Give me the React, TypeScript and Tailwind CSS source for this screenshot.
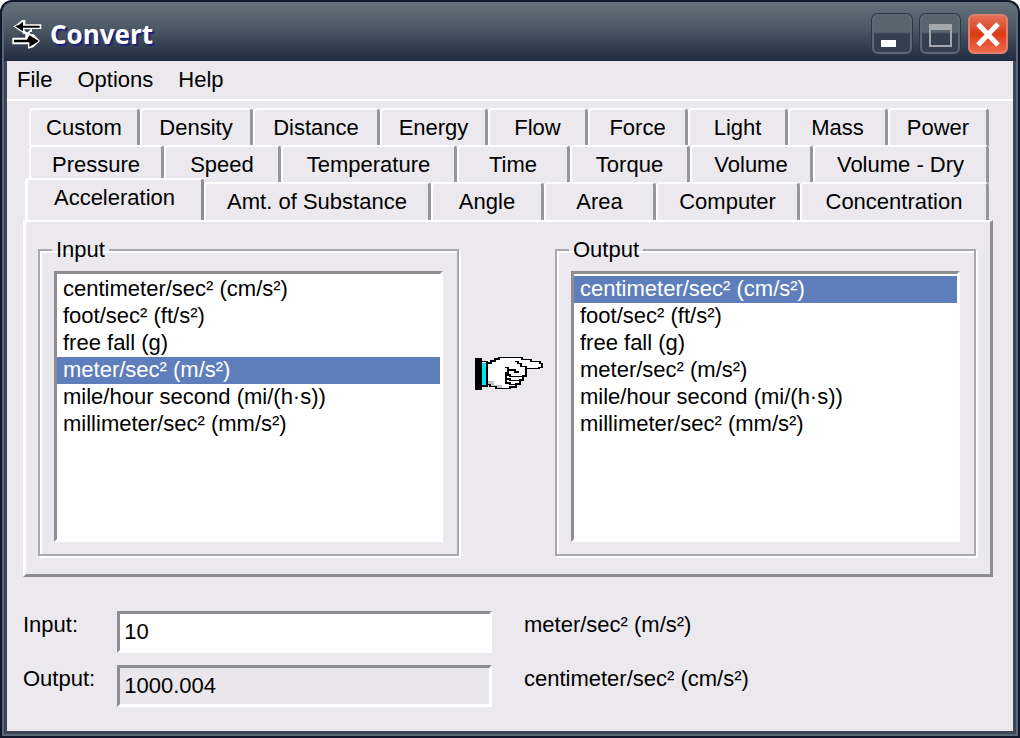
import { useState } from "react";

const UNITS = [
  "centimeter/sec² (cm/s²)",
  "foot/sec² (ft/s²)",
  "free fall (g)",
  "meter/sec² (m/s²)",
  "mile/hour second (mi/(h·s))",
  "millimeter/sec² (mm/s²)",
];

const ROW_ONE = ["Custom", "Density", "Distance", "Energy", "Flow", "Force", "Light", "Mass", "Power"];
const ROW_TWO = ["Pressure", "Speed", "Temperature", "Time", "Torque", "Volume", "Volume - Dry"];
const ROW_THREE = ["Acceleration", "Amt. of Substance", "Angle", "Area", "Computer", "Concentration"];

function Tab({ label, selected = false }: { label: string; selected?: boolean }) {
  return (
    <button
      type="button"
      role="tab"
      aria-selected={selected}
      className={
        selected
          ? "relative z-10 -mt-1 -ml-1 h-[42px] rounded-t-sm border-t-2 border-r-3 border-l-3 border-t-white border-r-[#8e8d91] border-l-white bg-[#ebe9ed] pb-1"
          : "h-[38px] rounded-t-sm border-t-2 border-r-3 border-l-2 border-t-white border-r-[#96959a] border-l-white bg-[#ebe9ed]"
      }
    >
      {label}
    </button>
  );
}

function UnitList({ title, value, onChange }: { title: string; value: string; onChange: (v: string) => void }) {
  return (
    <fieldset className="min-w-0 flex-1 border-2 border-[#a9a8ac] px-[14px] pt-[9px] pb-3 shadow-[2px_2px_0_#fff,inset_2px_2px_0_#fff]">
      <legend className="-ml-0.5 px-1 leading-6">{title}</legend>
      <select
        size={6}
        aria-label={title}
        value={value}
        onChange={(e) => onChange(e.target.value)}
        className="block h-[271px] w-full appearance-none overflow-hidden border-3 border-t-[#8e8d91] border-r-white border-b-white border-l-[#8e8d91] bg-white px-0 py-0.5 outline-none"
      >
        {UNITS.map((unit) => (
          <option
            key={unit}
            value={unit}
            className="h-[27px] px-1.5 py-0 leading-[27px] text-black checked:bg-[#5f7fbc]! checked:text-white!"
          >
            {unit}
          </option>
        ))}
      </select>
    </fieldset>
  );
}

function ArrowsIcon() {
  return (
    <svg width="30" height="30" viewBox="36 49 90 90" aria-hidden="true">
      <path
        d="M40 71L52 64L66 52H76V65H124V79H96V88H90V94H100L120 115L100 134L84 138V125H37V105H76V94H70L66 88L52 80Z"
        fill="#fff"
      />
      <path d="M45 71L57 66L69 57V69H119V75H69V86L57 78ZM42 111H81L88 98L102 106L116 115L102 125L88 132V119H42Z" fill="#000" />
      <path d="M72 80H92L84 88H78ZM56 95H74V102H56Z" fill="#3a4553" />
    </svg>
  );
}

function HandIcon() {
  return (
    <svg width="70" height="38" viewBox="42 57 210 114" shapeRendering="crispEdges" aria-hidden="true">
      <path d="M66 78H84L105 75L117 66H186V75H216V81H240L246 87V96L240 99H198V123L186 132L177 144L165 153L150 162H108L84 153L66 156Z" fill="#fff" />
      <path d="M84 138H102V150H126V159H108V153H84Z" fill="#c4c4c8" />
      <path d="M45 69H66V165H45Z" fill="#000" />
      <path d="M66 84H78V153H66Z" fill="#00e8ee" />
      <g fill="none" stroke="#000" strokeWidth="5">
        <path d="M66 79H81V153H66M81 84H93V78H105V72H117V67H186V73H213V79H240V85H246V97H237V100H198" />
        <path d="M165 79H174V85H183V94H198V123H189V135H180V147H168V156H150V160H108V154H90V148H81" />
        <path d="M135 97H144V105H165V111H177" />
        <path d="M144 108V114H138V120H150V124H189" />
        <path d="M138 120V132H150V136H183" />
        <path d="M138 132V144H150V148H174" />
      </g>
    </svg>
  );
}

const captionButton =
  "grid size-10 place-items-center rounded-md border-2 border-[#5d6876] bg-linear-to-b from-[#59646e] from-45% to-[#344050] to-50% shadow-[0_0_0_1px_#2c3543]";
const field =
  "h-[42px] w-full border-3 border-t-[#8e8d91] border-r-white border-b-white border-l-[#8e8d91] px-1 outline-none";

export default function App() {
  const [from, setFrom] = useState(UNITS[3]);
  const [to, setTo] = useState(UNITS[0]);
  const [amount, setAmount] = useState("10");

  return (
    <div className="min-h-screen bg-white font-['Liberation_Sans',Arial,sans-serif] text-[22px] leading-7 text-black">
      <main className="flex min-h-screen flex-col rounded-t-xl border-2 border-[#10182a] bg-[#596777] px-[2px] pb-[2px]">
        <header className="flex h-[59px] items-center rounded-t-[10px] bg-linear-to-b from-[#66727b] via-[#4b5763] via-47% to-[#212c40] pt-1 pr-2 pl-2">
          <ArrowsIcon />
          <h1 className="ml-2 flex-1 font-['Open_Sans','Noto_Sans',sans-serif] text-[26px] font-bold text-white [text-shadow:2px_2px_1px_#18227c]">
            Convert
          </h1>
          <div className="flex gap-2">
            <button type="button" aria-label="Minimize" className={captionButton}>
              <svg width="36" height="36" viewBox="0 0 36 36" aria-hidden="true">
                <path d="M7 24H22V31H7Z" fill="#fff" />
              </svg>
            </button>
            <button type="button" aria-label="Maximize" className={captionButton}>
              <svg width="36" height="36" viewBox="0 0 36 36" aria-hidden="true">
                <path d="M8 9H29V30H8Z" fill="none" stroke="#a3a6aa" strokeWidth="2" />
                <path d="M7 8H30V14H7Z" fill="#a3a6aa" />
              </svg>
            </button>
            <button
              type="button"
              aria-label="Close"
              className="grid size-10 place-items-center rounded-md border-2 border-[#e0806c] bg-linear-to-b from-[#e36d53] via-[#dc3a12] via-50% to-[#f0694a]"
            >
              <svg width="36" height="36" viewBox="0 0 36 36" aria-hidden="true">
                <path d="M8 8L28 29M28 8L8 29" stroke="#fff" strokeWidth="5" />
              </svg>
            </button>
          </div>
        </header>

        <div className="flex flex-1 flex-col border-x-3 border-b-3 border-[#3b4657] bg-[#ebe9ed]">
          <nav className="flex h-[38px] items-center gap-[25px] px-[10px]">
            <button type="button">File</button>
            <button type="button">Options</button>
            <button type="button">Help</button>
          </nav>
          <div className="border-t-2 border-white pt-[7px] pr-5 pl-4">
            <div role="tablist" className="pr-1 pl-[6px]">
              <div className="grid grid-cols-[111fr_113fr_127fr_108fr_100fr_100fr_100fr_100fr_101fr]">
                {ROW_ONE.map((label) => (
                  <Tab key={label} label={label} />
                ))}
              </div>
              <div className="-mt-px grid grid-cols-[135fr_117fr_176fr_113fr_120fr_123fr_176fr]">
                {ROW_TWO.map((label) => (
                  <Tab key={label} label={label} />
                ))}
              </div>
              <div className="-mt-px grid grid-cols-[175fr_227fr_113fr_112fr_144fr_189fr]">
                {ROW_THREE.map((label) => (
                  <Tab key={label} label={label} selected={label === "Acceleration"} />
                ))}
              </div>
            </div>
            <section className="flex items-center border-t-2 border-r-3 border-b-3 border-l-3 border-t-white border-r-[#8e8d91] border-b-[#8e8d91] border-l-white pt-4 pr-[14px] pb-[18px] pl-3">
              <UnitList title="Input" value={from} onChange={setFrom} />
              <div className="flex w-24 justify-center pb-12 pl-1">
                <HandIcon />
              </div>
              <UnitList title="Output" value={to} onChange={setTo} />
            </section>
          </div>

          <div className="grid grid-cols-[94fr_374fr_484fr] gap-y-3 pt-[34px] pr-9 pb-6 pl-4">
            <label htmlFor="amount">Input:</label>
            <input
              id="amount"
              value={amount}
              onChange={(e) => setAmount(e.target.value)}
              className={`${field} bg-white`}
            />
            <span className="pl-8">{from}</span>
            <label htmlFor="result">Output:</label>
            <input id="result" readOnly value="1000.004" className={`${field} bg-[#e9e7eb]`} />
            <span className="pl-8">{to}</span>
          </div>
        </div>
      </main>
    </div>
  );
}
